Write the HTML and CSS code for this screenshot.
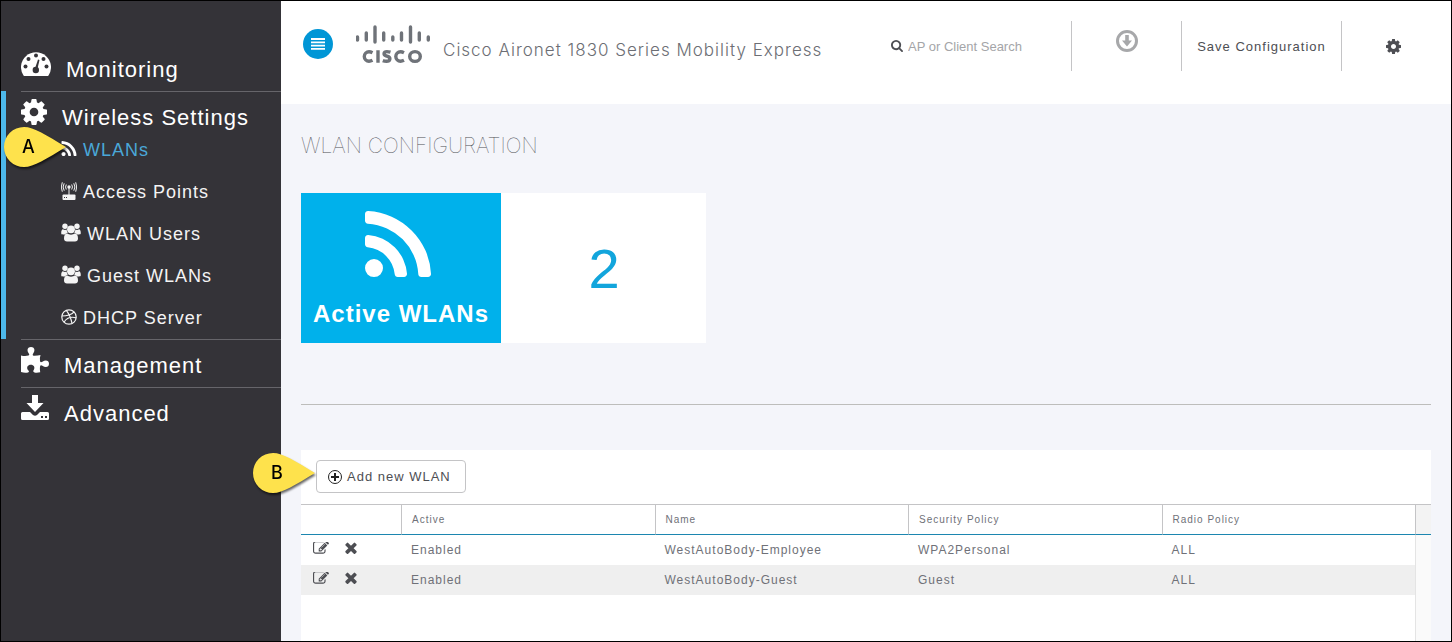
FILE: index.html
```html
<!DOCTYPE html>
<html lang="en">
<head>
    <meta charset="UTF-8">
    <meta name="viewport" content="width=device-width, initial-scale=1.0">
    <title>Cisco Aironet 1830 Series Mobility Express</title>
    <link rel="stylesheet" href="styles.css">
</head>
<body>
    <!-- shared icons -->
    <svg class="sprite" aria-hidden="true">
        <symbol id="rss" viewBox="192 128 1408 1408">
            <path d="M576 1344q0 80-56 136t-136 56-136-56-56-136 56-136 136-56 136 56 56 136zm512 123q2 28-17 48-18 21-47 21h-135q-25 0-43-16.500t-20-41.500q-22-229-184.500-391.500t-391.500-184.500q-25-2-41.500-20t-16.500-43v-135q0-29 21-47 17-17 43-17h5q160 13 306 80.500t259 181.500q114 113 181.500 259t80.500 306zm512 2q2 27-18 47-18 20-46 20h-143q-26 0-44.500-17.500t-19.500-42.500q-12-215-101-408.500t-231.500-336-336-231.500-408.500-102q-25-1-42.500-19.500t-17.500-43.500v-143q0-28 20-46 18-18 44-18h3q262 13 501.500 120t425.500 294q187 186 294 425.500t120 501.500z"/>
        </symbol>
        <symbol id="cog" viewBox="128 128 1536 1536">
            <path d="M1152 896q0-106-75-181t-181-75-181 75-75 181 75 181 181 75 181-75 75-181zm512-109v222q0 12-8 23t-20 13l-185 28q-19 54-39 91 35 50 107 138 10 12 10 25t-9 23q-27 37-99 108t-94 71q-12 0-26-9l-138-108q-44 23-91 38-16 136-29 186-7 28-36 28h-222q-14 0-24.500-8.500t-11.500-21.500l-28-184q-49-16-90-37l-141 107q-10 9-25 9-14 0-25-11-126-114-165-168-7-10-7-23 0-12 8-23 15-21 51-66.500t54-70.500q-27-50-41-99l-183-27q-13-2-21-12.500t-8-23.500v-222q0-12 8-23t19-13l186-28q14-46 39-92-40-57-107-138-10-12-10-24 0-10 9-23 26-36 98.500-107.500t94.500-71.500q13 0 26 10l138 107q44-23 91-38 16-136 29-186 7-28 36-28h222q14 0 24.500 8.500t11.500 21.500l28 184q49 16 90 37l142-107q9-9 24-9 13 0 25 10 129 119 165 170 7 8 7 22 0 12-8 23-15 21-51 66.500t-54 70.500q26 50 41 98l183 28q13 2 21 12.500t8 23.500z"/>
        </symbol>
        <symbol id="users" viewBox="0 0 20 19">
            <circle cx="4" cy="3.200" r="2.700"/>
            <circle cx="16" cy="3.200" r="2.700"/>
            <path d="M.2 10.200C.2 8 .8 6.300 2 6.300c.8.700 2.400.9 3.600.3.200 1.500.6 2.500 1.200 3.400-1.300.1-2.300.6-3 1.400H2C.8 11.400.2 11 .2 10.200zM19.800 10.200c0-2.200-.6-3.900-1.800-3.900-.8.700-2.400.9-3.600.3-.2 1.500-.6 2.500-1.200 3.400 1.300.1 2.300.6 3 1.400H18c1.200 0 1.800-.4 1.800-1.200z"/>
            <circle cx="10" cy="6.300" r="3.900"/>
            <path d="M3 15.600c0-2.900.9-5 3.300-5 1 .7 2.200 1.200 3.700 1.200s2.700-.5 3.700-1.200c2.400 0 3.300 2.100 3.300 5 0 1.900-1.200 2.900-3 2.900H6c-1.800 0-3-1-3-2.900z"/>
        </symbol>
        <symbol id="edit" viewBox="0 256 1792 1280">
            <path d="M888 1184l116-116-152-152-116 116v56h96v96h56zm440-720q-16-16-33 1l-350 350q-17 17-1 33t33-1l350-350q17-17 1-33zm80 594v190q0 119-84.500 203.500t-203.500 84.500h-832q-119 0-203.500-84.500t-84.500-203.500v-832q0-119 84.500-203.500t203.500-84.500h832q63 0 117 25 15 7 18 23 3 17-9 29l-49 49q-14 14-32 8-23-6-45-6h-832q-66 0-113 47t-47 113v832q0 66 47 113t113 47h832q66 0 113-47t47-113v-126q0-13 9-22l64-64q15-15 35-7t20 29zm-96-738l288 288-672 672h-288v-288zm444 132l-92 92-288-288 92-92q28-28 68-28t68 28l152 152q28 28 28 68t-28 68z"/>
        </symbol>
        <symbol id="times" viewBox="302 302 1188 1252">
            <path d="M1490 1322q0 40-28 68l-136 136q-28 28-68 28t-68-28l-294-294-294 294q-28 28-68 28t-68-28l-136-136q-28-28-28-68t28-68l294-294-294-294q-28-28-28-68t28-68l136-136q28-28 68-28t68 28l294 294 294-294q28-28 68-28t68 28l136 136q28 28 28 68t-28 68l-294 294 294 294q28 28 28 68z"/>
        </symbol>
        <symbol id="pin" viewBox="0 0 62 40">
            <path d="M20 0C30 0 42 8 62 20 42 32 30 40 20 40A20 20 0 0 1 20 0z"/>
        </symbol>
    </svg>

    <div class="app">
        <nav class="sidebar">
            <ul class="menu">
                <li class="menu-item first">
                    <a class="menu-link" href="#">
                        <svg class="menu-icon gauge" viewBox="0 0 30 26">
                            <path d="M2.500 24.500A15 15 0 1 1 27.500 24.500Q27 25 26 25H4Q3 25 2.500 24.500z"/>
                            <g class="cut">
                                <circle cx="4.500" cy="15.500" r="2"/>
                                <circle cx="7.500" cy="8" r="2"/>
                                <circle cx="15" cy="4.500" r="2"/>
                                <circle cx="22.500" cy="8" r="2"/>
                                <circle cx="25.500" cy="15.500" r="2"/>
                                <circle cx="14.800" cy="19" r="3.200"/>
                                <path d="M13.800 18L17 8.500l1.500.5-2.200 9.500z"/>
                            </g>
                        </svg>
                        <span>Monitoring</span>
                    </a>
                </li>
                <li class="menu-item open">
                    <a class="menu-link" href="#">
                        <svg class="menu-icon gear"><use href="#cog"/></svg>
                        <span>Wireless Settings</span>
                    </a>
                    <ul class="submenu">
                        <li class="sub-item">
                            <a class="sub-link active" href="#"><svg class="sub-icon signal"><use href="#rss"/></svg>WLANs</a>
                            <div class="callout callout-a"><svg><use href="#pin"/></svg><b>A</b></div>
                        </li>
                        <li class="sub-item">
                            <a class="sub-link" href="#">
                                <svg class="sub-icon" viewBox="0 0 16 18">
                                    <rect x="1.500" y="12.500" width="13" height="5.500" rx="1"/>
                                    <circle cx="8" cy="5" r="1.700"/>
                                    <path class="wave" d="M8 5v8M5.300 2.500q-1.500 2.500 0 5M3.200 1.300q-2.200 3.700 0 7.400M1.300.3q-2 4.700 0 9.400M10.700 2.500q1.500 2.500 0 5M12.800 1.300q2.200 3.700 0 7.400M14.700.3q2 4.700 0 9.400"/>
                                    <path class="cut" d="M3 15h1v1H3zM5 15h1v1H5z"/>
                                </svg>Access Points</a>
                        </li>
                        <li class="sub-item">
                            <a class="sub-link" href="#"><svg class="sub-icon wide"><use href="#users"/></svg>WLAN Users</a>
                        </li>
                        <li class="sub-item">
                            <a class="sub-link" href="#"><svg class="sub-icon wide"><use href="#users"/></svg>Guest WLANs</a>
                        </li>
                        <li class="sub-item">
                            <a class="sub-link" href="#">
                                <svg class="sub-icon ball" viewBox="0 0 16 16">
                                    <circle cx="8" cy="8" r="7.200"/>
                                    <path d="M5.300 1.300Q9.500 6.500 11 14.500M.8 7Q9 7 13.200 2.800M3 13.200Q7 6.600 15.200 8.800"/>
                                </svg>DHCP Server</a>
                        </li>
                    </ul>
                </li>
                <li class="menu-item">
                    <a class="menu-link" href="#">
                        <svg class="menu-icon" viewBox="0 0 28 28">
                            <path d="M0 9.500Q4 10.500 7.500 9.600 9 9 7.800 7.400C5.500 4.500 6.500 1 10 1s4.500 3.500 2.200 6.400C11 9 12 9.700 13.500 9.700q3.500 0 6-.8Q18.500 12 19 15q.4 2 2.400.8c3-2.300 6.600-1.500 6.600 2s-3.600 4.300-6.600 2q-2-1.200-2.400.9-.4 2.500.2 5.500-3 .8-5.700.3-2-.5-.8-2.400c1.800-2.800 0-5.300-2.900-5.300s-4.700 2.500-2.900 5.300Q9 26 7 26.400 3.500 27 0 26z"/>
                        </svg>
                        <span>Management</span>
                    </a>
                </li>
                <li class="menu-item">
                    <a class="menu-link" href="#">
                        <svg class="menu-icon" viewBox="0 0 28 28">
                            <path d="M11 1h6v8h5.500L14 18 5.500 9H11z"/>
                            <path d="M1.500 18H9l3 3q2 1.500 4 0l3-3h7.500q1.500 0 1.500 1.500v5q0 1.500-1.500 1.500h-25Q0 26 0 24.500v-5Q0 18 1.500 18z"/>
                            <path class="cut" d="M20 22h2v2h-2zM24 22h2v2h-2z"/>
                        </svg>
                        <span>Advanced</span>
                    </a>
                </li>
            </ul>
        </nav>

        <div class="page">
            <header class="topbar">
                <button class="menu-toggle" type="button" aria-label="Toggle menu">
                    <svg viewBox="0 0 30 30"><path d="M8 10h14M8 13.300h14M8 16.600h14M8 19.900h14"/></svg>
                </button>
                <svg class="logo" viewBox="0 0 74 40" role="img" aria-label="Cisco">
                    <path class="bars" d="M1.500 12v3M10.300 8v7M19 2v15M27.700 8v7M36.800 12v3M45.500 8v7M54.500 2v15M63.300 8v7M72.300 12v3"/>
                    <path class="mark" d="M16.500 27.700Q14.700 26.800 13 26.800a4.700 4.700 0 0 0 0 9.400q1.700 0 3.500-.9M22 25.200v12.600M34.500 27.200q-2-.6-3.600-.6c-3.400 0-3.800 3.200-.8 4.200l1.600.6c3.400 1.200 2.600 4.900-1.200 4.900q-2 0-3.700-.7M48 27.700q-1.800-.9-3.500-.9a4.700 4.700 0 0 0 0 9.400q1.700 0 3.500-.9"/>
                    <ellipse class="mark" cx="59" cy="31.500" rx="5.300" ry="4.900"/>
                </svg>
                <span class="product">Cisco Aironet 1830 Series Mobility Express</span>
                <label class="search">
                    <svg viewBox="64 128 1664 1664"><path d="M1216 832q0-185-131.500-316.500t-316.500-131.500-316.500 131.500-131.500 316.500 131.500 316.500 316.500 131.500 316.500-131.500 131.500-316.500zm512 832q0 52-38 90t-90 38q-54 0-90-38l-343-342q-179 124-399 124-143 0-273.500-55.500t-225-150-150-225-55.500-273.500 55.500-273.500 150-225 225-150 273.500-55.500 273.500 55.500 225 150 150 225 55.500 273.500q0 220-124 399l343 343q37 37 37 90z"/></svg>
                    <input type="text" placeholder="AP or Client Search" aria-label="AP or Client Search">
                </label>
                <button class="tool download" type="button" aria-label="Download">
                    <svg viewBox="0 0 22 22">
                        <circle cx="11" cy="11" r="9.500"/>
                        <path d="M9.200 5h3.600v5.500h3.200L11 16.500 6 10.500h3.200z"/>
                    </svg>
                </button>
                <button class="tool save" type="button">Save Configuration</button>
                <button class="tool settings" type="button" aria-label="Settings">
                    <svg><use href="#cog"/></svg>
                </button>
            </header>

            <main class="content">
                <h1>WLAN CONFIGURATION</h1>
                <section class="tile">
                    <div class="tile-name">
                        <svg><use href="#rss"/></svg>
                        <span>Active WLANs</span>
                    </div>
                    <div class="tile-count">2</div>
                </section>
                <hr>
                <section class="panel">
                    <div class="toolbar">
                        <button class="add" type="button">
                            <svg viewBox="0 0 16 16"><circle cx="8" cy="8" r="6.500"/><path d="M8 4v8M4 8h8"/></svg>
                            Add new WLAN
                        </button>
                        <div class="callout callout-b"><svg><use href="#pin"/></svg><b>B</b></div>
                    </div>
                    <div class="grid">
                        <table>
                            <thead>
                                <tr>
                                    <th class="actions"></th>
                                    <th>Active</th>
                                    <th>Name</th>
                                    <th>Security Policy</th>
                                    <th>Radio Policy</th>
                                </tr>
                            </thead>
                            <tbody>
                                <tr>
                                    <td>
                                        <div class="row-tools">
                                            <button type="button" aria-label="Edit WestAutoBody-Employee"><svg class="edit"><use href="#edit"/></svg></button>
                                            <button type="button" aria-label="Delete WestAutoBody-Employee"><svg class="times"><use href="#times"/></svg></button>
                                        </div>
                                    </td>
                                    <td>Enabled</td>
                                    <td>WestAutoBody-Employee</td>
                                    <td>WPA2Personal</td>
                                    <td>ALL</td>
                                </tr>
                                <tr>
                                    <td>
                                        <div class="row-tools">
                                            <button type="button" aria-label="Edit WestAutoBody-Guest"><svg class="edit"><use href="#edit"/></svg></button>
                                            <button type="button" aria-label="Delete WestAutoBody-Guest"><svg class="times"><use href="#times"/></svg></button>
                                        </div>
                                    </td>
                                    <td>Enabled</td>
                                    <td>WestAutoBody-Guest</td>
                                    <td>Guest</td>
                                    <td>ALL</td>
                                </tr>
                            </tbody>
                        </table>
                        <div class="gutter"><div class="gutter-head"></div></div>
                    </div>
                </section>
            </main>
        </div>
    </div>
</body>
</html>
```

FILE: styles.css
```css
* {
    box-sizing: border-box;
}

body {
    margin: 0;
    font-family: "Helvetica Neue", "Liberation Sans", Arial, sans-serif;
    font-size: 13px;
    letter-spacing: 1px;
    color: #4d4e53;
}

button {
    font: inherit;
    letter-spacing: inherit;
    color: inherit;
    background: none;
    border: 0;
    padding: 0;
    cursor: pointer;
}

svg {
    display: block;
    flex: none;
    fill: currentColor;
}

.sprite {
    position: absolute;
    width: 0;
    height: 0;
}

.app {
    display: flex;
    min-height: 100vh;
    border: 1px solid #000;
    background: #f4f5fa;
}

/* sidebar */
.sidebar {
    flex: none;
    width: 280px;
    padding-top: 42px;
    background: #343338;
    color: #fff;
}

.menu, .submenu {
    list-style: none;
    margin: 0;
    padding: 0;
}

.menu-item {
    position: relative;
    padding-left: 20px;
}

.menu-item.open {
    padding-left: 15px;
    border-left: 5px solid #4db8ea;
}

.menu-link {
    display: flex;
    gap: 15px;
    height: 48px;
    padding-top: 6px;
    border-top: 1px solid #66656a;
    font-size: 22px;
    line-height: 28px;
    color: #fff;
    text-decoration: none;
}

.first .menu-link {
    border-top-color: transparent;
}

.menu-item.open .menu-link {
    height: 38px;
}

.menu-link span {
    padding-top: 6px;
}

.menu-icon {
    width: 28px;
    height: 28px;
}

.gauge {
    width: 30px;
}

.gear {
    width: 26px;
}

.cut {
    fill: #343338;
}

.sub-item {
    position: relative;
    padding-left: 40px;
}

.sub-link {
    display: flex;
    align-items: center;
    gap: 6px;
    height: 42px;
    font-size: 18px;
    color: #f4f4f4;
    text-decoration: none;
}

.sub-link.active {
    color: #4aa8d8;
}

.sub-icon {
    width: 16px;
    height: 18px;
    margin-bottom: 3px;
}

.signal {
    height: 15px;
    color: #fff;
}

.wide {
    width: 20px;
    height: 19px;
}

.wave {
    fill: none;
    stroke: currentColor;
}

.ball {
    fill: none;
    stroke: currentColor;
    stroke-width: 1.2;
}

/* yellow step markers lying over the page */
.callout {
    position: absolute;
    z-index: 1;
    width: 62px;
    height: 40px;
    color: #fee24c;
    filter: drop-shadow(1px 2px 1px rgba(0, 0, 0, .6));
}

.callout svg {
    width: 62px;
    height: 40px;
}

.callout b {
    position: absolute;
    top: 0;
    left: 18px;
    font-family: Inter, "Liberation Sans", sans-serif;
    font-size: 18px;
    font-weight: 500;
    line-height: 40px;
    letter-spacing: 0;
    color: #000;
}

.callout-a {
    top: -2px;
    left: -17px;
}

.callout-b {
    top: 3px;
    left: -48px;
}

/* top bar */
.page {
    display: flex;
    flex-direction: column;
    flex: 1;
    min-width: 0;
}

.topbar {
    display: flex;
    align-items: flex-start;
    height: 103px;
    padding-top: 20px;
    padding-left: 22px;
    background: #fff;
}

.menu-toggle {
    margin-top: 8px;
    width: 30px;
    height: 30px;
    border-radius: 50%;
    background: #0096d6;
}

.menu-toggle svg {
    stroke: #fff;
    stroke-width: 1.8;
}

.logo {
    width: 74px;
    height: 40px;
    margin: 4px 13px 0 23px;
    fill: none;
    stroke: #6f7379;
    stroke-width: 3.4;
}

.bars {
    stroke-linecap: round;
}

.product {
    flex: 1;
    font-family: Inter, "Liberation Sans", sans-serif;
    font-weight: 300;
    font-size: 17px;
    line-height: 58px;
    color: #6c6e74;
    white-space: nowrap;
}

.search {
    display: flex;
    align-items: center;
    gap: 5px;
    width: 180px;
    height: 50px;
}

.search svg {
    width: 12px;
    height: 12px;
}

.search input {
    flex: 1;
    min-width: 0;
    padding: 0;
    border: 0;
    outline: 0;
    font-family: inherit;
    font-size: 13px;
}

.search input::placeholder {
    color: #a4a5a8;
}

.tool {
    display: flex;
    align-items: center;
    justify-content: center;
    flex: none;
    width: 110px;
    height: 50px;
    border-left: 1px solid #c4c4c6;
}

.tool.save {
    width: 160px;
}

.download svg {
    width: 22px;
    height: 22px;
    margin-bottom: 10px;
    fill: #a7a8aa;
}

.download circle {
    fill: none;
    stroke: #a7a8aa;
    stroke-width: 3;
}

.tool.settings {
    padding-right: 6px;
}

.settings svg {
    width: 15px;
    height: 15px;
}

/* content */
.content {
    display: flex;
    flex-direction: column;
    flex: 1;
    padding: 0 20px;
}

h1 {
    margin: 26px 0 32px;
    font-family: Inter, "Liberation Sans", sans-serif;
    font-weight: 100;
    font-size: 21px;
    line-height: 31px;
    letter-spacing: 0;
}

.tile {
    display: flex;
    align-self: flex-start;
    height: 150px;
}

.tile-name {
    display: flex;
    flex-direction: column;
    align-items: center;
    justify-content: space-between;
    width: 200px;
    padding: 18px 0 15px;
    background: #00b1eb;
    color: #fff;
    font-size: 24px;
    font-weight: bold;
}

.tile-name svg {
    width: 66px;
    height: 66px;
    margin-right: 6px;
}

.tile-count {
    width: 205px;
    padding-left: 2px;
    background: #fff;
    color: #12a5dc;
    font-size: 56px;
    line-height: 152px;
    text-align: center;
}

hr {
    width: 100%;
    margin: 61px 0 45px;
    border: 0;
    border-top: 1px solid #bdbdbb;
}

.panel {
    display: flex;
    flex-direction: column;
    flex: 1;
    background: #fff;
}

.toolbar {
    position: relative;
    padding: 10px 15px 11px;
}

.add {
    display: flex;
    align-items: center;
    gap: 4px;
    height: 33px;
    padding: 0 14px 0 10px;
    border: 1px solid #c4c4c6;
    border-radius: 4px;
}

.add svg {
    width: 16px;
    height: 16px;
    fill: none;
    stroke: #222;
}

.add path {
    stroke-width: 2;
}

.grid {
    display: flex;
    flex: 1;
}

table {
    flex: 1;
    width: 100%;
    align-self: flex-start;
    table-layout: fixed;
    border-collapse: separate;
    border-spacing: 0;
    font-size: 12px;
    color: #6f7178;
}

th {
    height: 31px;
    padding: 0 10px;
    border-top: 1px solid #c4c4c6;
    border-bottom: 1px solid #1c86b0;
    border-left: 1px solid #c4c4c6;
    font-size: 10px;
    font-weight: normal;
    text-align: left;
}

td {
    height: 30px;
    padding: 0 10px;
}

th.actions {
    width: 100px;
    border-left: 0;
}

tbody tr:nth-child(even) {
    background: #efefef;
}

.row-tools {
    display: flex;
    align-items: center;
    gap: 16px;
    padding-left: 2px;
    padding-bottom: 5px;
    color: #4d4e53;
}

.edit {
    width: 16px;
    height: 12px;
}

.times {
    width: 12px;
    height: 12px;
}

.gutter {
    flex: none;
    width: 16px;
    background: linear-gradient(90deg, #e4e4e4 1px, #fafafa 1px);
}

.gutter-head {
    height: 31px;
    background: #f3f3f3;
    border: 1px solid #c4c4c6;
    border-right: 0;
    border-bottom-color: #1c86b0;
}
```
